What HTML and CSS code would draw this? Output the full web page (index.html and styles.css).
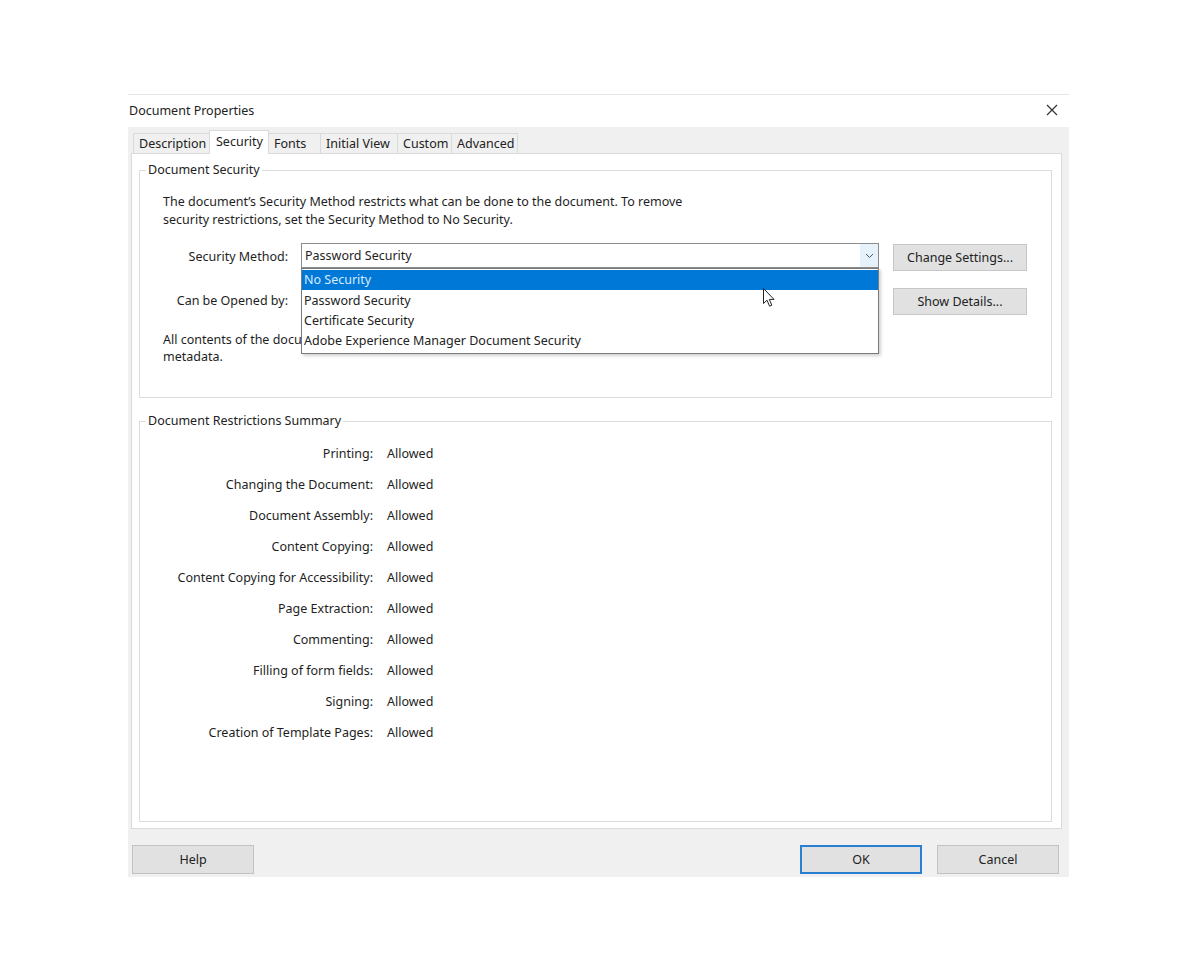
FILE: index.html
```html
<!DOCTYPE html>
<html>
<head>
<meta charset="utf-8">
<link rel="stylesheet" href="styles.css">
</head>
<body>
<div class="dialog">
  <div class="titlebar">
    <span class="title">Document Properties</span>
    <svg class="close" width="12" height="12" viewBox="0 0 12 12"><path d="M1 1 L11 11 M11 1 L1 11" stroke="#333" stroke-width="1.2" fill="none"/></svg>
  </div>
  <div class="body">
    <div class="tabs">
      <div class="tab tab-desc">Description</div>
      <div class="tab tab-sec active">Security</div>
      <div class="tab tab-fonts">Fonts</div>
      <div class="tab tab-init">Initial View</div>
      <div class="tab tab-custom">Custom</div>
      <div class="tab tab-adv">Advanced</div>
    </div>
    <div class="panel">
      <fieldset class="group group-sec">
        <legend>Document Security</legend>
        <p class="intro">The document’s Security Method restricts what can be done to the document. To remove<br>security restrictions, set the Security Method to No Security.</p>
        <div class="field-row row-method">
          <span class="field-label">Security Method:</span>
          <div class="select">
            <span class="select-value">Password Security</span>
            <span class="select-arrow"><svg width="9" height="6" viewBox="0 0 9 6"><path d="M1 1 L4.5 4.5 L8 1" stroke="#555" stroke-width="1" fill="none"/></svg></span>
            <div class="dropdown">
              <div class="option selected">No Security</div>
              <div class="option">Password Security</div>
              <div class="option">Certificate Security</div>
              <div class="option">Adobe Experience Manager Document Security</div>
              <svg class="cursor" width="13" height="20" viewBox="0 0 13 20"><path d="M0.5 0.5 L0.5 15.5 L4 12.2 L6.6 18.2 L8.8 17.2 L6.3 11.4 L11 11.4 Z" fill="#fff" stroke="#222" stroke-width="1"/></svg>
            </div>
          </div>
          <button class="btn btn-side">Change Settings...</button>
        </div>
        <div class="field-row row-opened">
          <span class="field-label">Can be Opened by:</span>
          <span class="field-spacer"></span>
          <button class="btn btn-side">Show Details...</button>
        </div>
        <div class="note">
          <div class="note-line clipped">All contents of the document are encrypted and search engines will not be able to access the document’s</div>
          <div class="note-line">metadata.</div>
        </div>
      </fieldset>
      <fieldset class="group group-sum">
        <legend>Document Restrictions Summary</legend>
        <div class="summary">
          <span class="s-label">Printing:</span><span class="s-value">Allowed</span>
          <span class="s-label">Changing the Document:</span><span class="s-value">Allowed</span>
          <span class="s-label">Document Assembly:</span><span class="s-value">Allowed</span>
          <span class="s-label">Content Copying:</span><span class="s-value">Allowed</span>
          <span class="s-label">Content Copying for Accessibility:</span><span class="s-value">Allowed</span>
          <span class="s-label">Page Extraction:</span><span class="s-value">Allowed</span>
          <span class="s-label">Commenting:</span><span class="s-value">Allowed</span>
          <span class="s-label">Filling of form fields:</span><span class="s-value">Allowed</span>
          <span class="s-label">Signing:</span><span class="s-value">Allowed</span>
          <span class="s-label">Creation of Template Pages:</span><span class="s-value">Allowed</span>
        </div>
      </fieldset>
    </div>
    <div class="footer">
      <button class="btn btn-foot">Help</button>
      <div class="footer-right">
        <button class="btn btn-foot btn-default">OK</button>
        <button class="btn btn-foot">Cancel</button>
      </div>
    </div>
  </div>
</div>
</body>
</html>
```

FILE: styles.css
```css
* { box-sizing: border-box; }
html, body { margin: 0; padding: 0; background: #fff; }
body {
  font-family: "Noto Sans", "Open Sans", sans-serif;
  font-size: 12.5px;
  color: #1e1e1e;
}
.dialog {
  margin: 94px 0 0 128px;
  width: 941px;
}
.titlebar {
  height: 33px;
  border-top: 1px solid #e6e6e6;
  background: #fff;
  display: flex;
  align-items: center;
  justify-content: space-between;
  padding: 0 11px 2px 1px;
}
.title { font-size: 12.5px; color: #222; }
.close { display: block; }
.body {
  background: #f0f0f0;
  padding: 3px 7px 3px 3px;
}
.tabs {
  display: flex;
  align-items: flex-end;
  height: 23px;
  padding-left: 2px;
}
.tab {
  height: 20px;
  line-height: 19px;
  padding: 0 5px;
  border: 1px solid #dadada;
  border-bottom: none;
  margin-right: -1px;
  background: #f0f0f0;
  color: #222;
  white-space: nowrap;
}
.tab.active {
  height: 24px;
  line-height: 21px;
  background: #fff;
  margin-bottom: -1px;
  position: relative;
  z-index: 1;
  padding: 0 6px;
}
.tab-desc { width: 77px; }
.tab-sec { width: 60px; }
.tab-fonts { width: 53px; }
.tab-init { width: 78px; }
.tab-custom { width: 55px; }
.tab-adv { width: 67px; }
.panel {
  background: #fff;
  border: 1px solid #dadada;
  height: 676px;
  padding: 7px 9px 6px 7px;
  display: flex;
  flex-direction: column;
}
.group {
  margin: 0;
  padding: 0;
  min-width: 0;
  border: 1px solid #dcdcdc;
}
.group legend {
  margin-left: 6px;
  padding: 0 2px;
  line-height: 18px;
  color: #222;
}
.group-sec { height: 237px; position: relative; z-index: 2; }
.group-sum { margin-top: 14px; flex: 1; }
.intro {
  margin: 14px 0 0 23px;
  line-height: 18px;
}
.field-row {
  display: flex;
  align-items: flex-start;
}
.row-method { margin-top: 14px; }
.row-opened { margin-top: 17px; }
.field-label {
  width: 148px;
  text-align: right;
  line-height: 18px;
  margin-top: 5px;
}
.row-opened .field-label { margin-top: 4px; }
.select {
  position: relative;
  margin-left: 13px;
  width: 578px;
  height: 25px;
  border: 1px solid #8c8c8c;
  background: #fff;
  display: flex;
  align-items: center;
}
.select-value { padding-left: 3px; flex: 1; line-height: 18px; }
.select-arrow {
  width: 18px;
  height: 100%;
  background: #e5f1fb;
  display: flex;
  align-items: center;
  justify-content: center;
}
.select-arrow svg { display: block; }
.dropdown {
  position: absolute;
  left: -1px;
  top: 24px;
  width: 578px;
  background: #fff;
  border: 1px solid #7a7a7a;
  padding: 1px 0 2px 0;
  box-shadow: 2px 2px 3px rgba(0,0,0,0.18);
  z-index: 5;
}
.option {
  height: 20px;
  line-height: 20px;
  padding-left: 2px;
  color: #222;
}
.option.selected {
  background: #0078d7;
  color: #d6ecff;
  margin: 0 0 1px 0;
}
.cursor {
  position: absolute;
  left: 461px;
  top: 19px;
}
.field-spacer {
  margin-left: 13px;
  width: 578px;
  height: 18px;
}
.btn {
  font-family: inherit;
  font-size: 12.5px;
  color: #222;
  background: #e1e1e1;
  border: 1px solid #c6c6c6;
  padding: 0;
  margin: 0;
}
.btn-side {
  margin-left: 14px;
  width: 134px;
  height: 27px;
}
.row-method .btn-side { margin-top: 1px; }
.note {
  margin: 16px 0 0 23px;
  line-height: 17px;
}
.note-line.clipped {
  width: 138px;
  overflow: hidden;
  white-space: nowrap;
}
.summary {
  display: grid;
  grid-template-columns: 233px auto;
  column-gap: 14px;
  row-gap: 13px;
  margin-top: 15px;
  line-height: 18px;
}
.s-label { text-align: right; }
.footer {
  display: flex;
  justify-content: space-between;
  margin-top: 16px;
  padding-left: 1px;
  padding-right: 3px;
}
.footer-right { display: flex; gap: 15px; }
.btn-foot {
  width: 122px;
  height: 29px;
  border-color: #c2c2c2;
}
.btn-default {
  border: 2px solid #2a7fd0;
}
```
